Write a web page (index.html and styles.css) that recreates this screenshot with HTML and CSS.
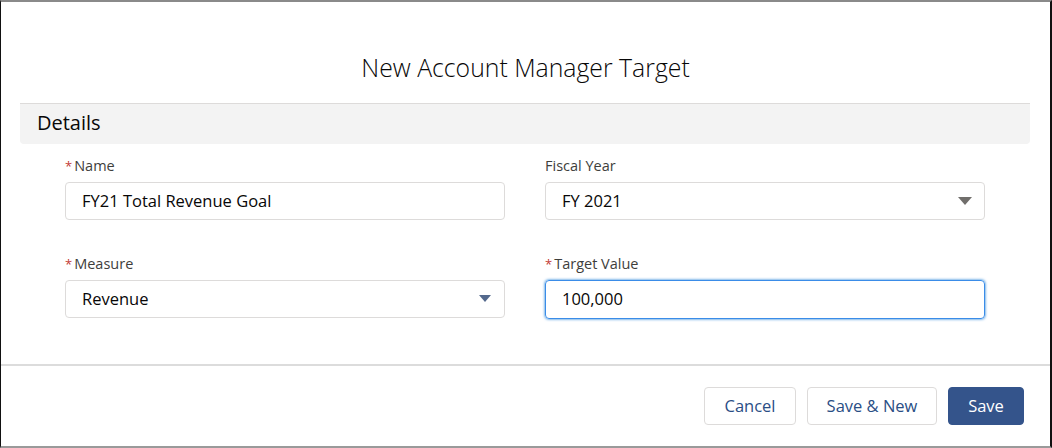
FILE: index.html
```html
<!DOCTYPE html>
<html lang="en">
<head>
<meta charset="utf-8">
<title>New Account Manager Target</title>
<link rel="stylesheet" href="styles.css">
</head>
<body>
<div class="modal">
  <header class="modal-header">
    <h1 class="modal-title">New Account Manager Target</h1>
  </header>
  <section class="section">
    <h2 class="section-title">Details</h2>
    <div class="form-grid">
      <div class="field">
        <label class="label"><abbr class="req">*</abbr>Name</label>
        <div class="input">FY21 Total Revenue Goal</div>
      </div>
      <div class="field">
        <label class="label">Fiscal Year</label>
        <div class="input select">FY 2021<span class="caret caret-gray"></span></div>
      </div>
      <div class="field">
        <label class="label"><abbr class="req">*</abbr>Measure</label>
        <div class="input select">Revenue<span class="caret caret-blue"></span></div>
      </div>
      <div class="field">
        <label class="label"><abbr class="req">*</abbr>Target Value</label>
        <div class="input focused">100,000</div>
      </div>
    </div>
  </section>
  <footer class="modal-footer">
    <button class="btn btn-neutral cancel">Cancel</button>
    <button class="btn btn-neutral savenew">Save &amp; New</button>
    <button class="btn btn-brand save">Save</button>
  </footer>
</div>
</body>
</html>
```
FILE: styles.css
```css
* { box-sizing: border-box; }
html, body { margin: 0; padding: 0; background: #fff; }
body {
  font-family: "Open Sans", "Liberation Sans", sans-serif;
  color: #080707;
}
.modal {
  width: 1052px;
  height: 448px;
  border-top: 2px solid #8a8a8a;
  border-left: 1px solid #111;
  border-right: 2px solid #111;
  border-bottom: 2px solid #9a9a9a;
  background: #fff;
  display: flex;
  flex-direction: column;
}
.modal-header {
  padding: 50px 0 21px;
  text-align: center;
}
.modal-title {
  margin: 0;
  font-size: 24.8px;
  line-height: 30px;
  font-weight: 300;
  color: #080707;
}
.section {
  margin: 0 20px 0 19px;
  height: 261px;
}
.section-title {
  margin: 0;
  height: 41px;
  border-top: 1px solid #dddbda;
  background: #f3f3f3;
  border-radius: 0 0 4px 4px;
  padding-left: 17px;
  font-size: 20px;
  font-weight: 400;
  line-height: 38px;
  color: #080707;
}
.form-grid {
  display: grid;
  grid-template-columns: 440px 440px;
  column-gap: 40px;
  row-gap: 34px;
  padding: 12px 45px 0 45px;
}
.field { display: flex; flex-direction: column; }
.label {
  font-size: 14.5px;
  line-height: 20px;
  color: #3e3e3c;
  margin-bottom: 6px;
}
.req {
  color: #c23934;
  text-decoration: none;
  margin-right: 2px;
  font-size: 13px;
}
.input {
  height: 38px;
  border: 1px solid #dddbda;
  border-radius: 4px;
  padding: 0 16px;
  font-size: 16.5px;
  line-height: 36px;
  color: #080707;
  position: relative;
}
.input.focused {
  border-color: #3a8ce8;
  box-shadow: 0 0 3px #0070d2;
  height: 39px;
}
.caret {
  position: absolute;
  top: 50%;
  width: 0;
  height: 0;
  border-left: 7px solid transparent;
  border-right: 7px solid transparent;
}
.caret-gray {
  right: 12px;
  border-top: 8px solid #706e6b;
  margin-top: -4px;
}
.caret-blue {
  right: 13px;
  border-left-width: 6px;
  border-right-width: 6px;
  border-top: 7px solid #54698d;
  margin-top: -4px;
}
.modal-footer {
  border-top: 2px solid #dcdcdc;
  padding: 21px 26px 0 0;
  display: flex;
  justify-content: flex-end;
  gap: 11px;
}
.btn {
  height: 38px;
  border-radius: 4px;
  font-family: inherit;
  font-size: 16.5px;
  line-height: 36px;
  padding: 0;
  cursor: pointer;
}
.btn-neutral {
  background: #fff;
  border: 1px solid #dddbda;
  color: #2a4e85;
}
.btn-brand {
  background: #34548b;
  border: 1px solid #34548b;
  color: #fff;
}
.cancel { width: 92px; }
.savenew { width: 130px; }
.save { width: 76px; }
```
